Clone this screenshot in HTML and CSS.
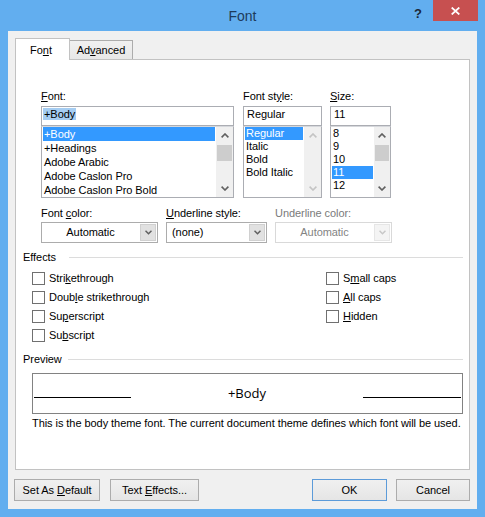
FILE: index.html
```html
<!DOCTYPE html>
<html>
<head>
<meta charset="utf-8">
<link rel="stylesheet" href="styles.css">
</head>
<body>
<div class="window">
  <div class="titlebar">
    <div class="title-balance"></div>
    <div class="title">Font</div>
    <div class="controls">
      <span class="help">?</span>
      <span class="close"><svg width="9" height="8" viewBox="0 0 9 8"><path d="M0.7 0.5L8.3 7.5M8.3 0.5L0.7 7.5" stroke="#fff" stroke-width="1.7" fill="none"/></svg></span>
    </div>
  </div>
  <div class="client">
    <div class="tabs">
      <div class="tab tab-active">Fo<u>n</u>t</div>
      <div class="tab tab-idle">Ad<u>v</u>anced</div>
    </div>
    <div class="panel">
      <div class="pickers">
        <div class="col col-font">
          <div class="label"><u>F</u>ont:</div>
          <div class="input"><span class="sel-text">+Body</span></div>
          <div class="list">
            <div class="items items-font">
              <div class="item selected">+Body</div>
              <div class="item">+Headings</div>
              <div class="item">Adobe Arabic</div>
              <div class="item">Adobe Caslon Pro</div>
              <div class="item">Adobe Caslon Pro Bold</div>
            </div>
            <div class="sbar">
              <div class="sarrow"><svg width="8" height="5" viewBox="0 0 8 5"><polyline points="0.6,4.4 4,1 7.4,4.4" fill="none" stroke="#606060" stroke-width="1.6"/></svg></div>
              <div class="thumb"></div>
              <div class="strack"></div>
              <div class="sarrow"><svg width="8" height="5" viewBox="0 0 8 5"><polyline points="0.6,0.6 4,4 7.4,0.6" fill="none" stroke="#606060" stroke-width="1.6"/></svg></div>
            </div>
          </div>
        </div>
        <div class="col col-style">
          <div class="label">Font st<u>y</u>le:</div>
          <div class="input">Regular</div>
          <div class="list">
            <div class="items items-small">
              <div class="item selected">Regular</div>
              <div class="item">Italic</div>
              <div class="item">Bold</div>
              <div class="item">Bold Italic</div>
            </div>
            <div class="sbar">
              <div class="sarrow"><svg width="8" height="5" viewBox="0 0 8 5"><polyline points="0.6,4.4 4,1 7.4,4.4" fill="none" stroke="#c4c4c4" stroke-width="1.6"/></svg></div>
              <div class="strack"></div>
              <div class="sarrow"><svg width="8" height="5" viewBox="0 0 8 5"><polyline points="0.6,0.6 4,4 7.4,0.6" fill="none" stroke="#c4c4c4" stroke-width="1.6"/></svg></div>
            </div>
          </div>
        </div>
        <div class="col col-size">
          <div class="label"><u>S</u>ize:</div>
          <div class="input">11</div>
          <div class="list">
            <div class="items items-small">
              <div class="item">8</div>
              <div class="item">9</div>
              <div class="item">10</div>
              <div class="item selected">11</div>
              <div class="item">12</div>
            </div>
            <div class="sbar sbar-narrow">
              <div class="sarrow"><svg width="8" height="5" viewBox="0 0 8 5"><polyline points="0.6,4.4 4,1 7.4,4.4" fill="none" stroke="#606060" stroke-width="1.6"/></svg></div>
              <div class="thumb"></div>
              <div class="strack"></div>
              <div class="sarrow"><svg width="8" height="5" viewBox="0 0 8 5"><polyline points="0.6,0.6 4,4 7.4,0.6" fill="none" stroke="#606060" stroke-width="1.6"/></svg></div>
            </div>
          </div>
        </div>
      </div>

      <div class="combos">
        <div class="ccol ccol-color">
          <div class="label">Font <u>c</u>olor:</div>
          <div class="combo">
            <div class="combo-text centered">Automatic</div>
            <div class="combo-btn"><svg width="7" height="5" viewBox="0 0 7 5"><polyline points="0.5,0.7 3.5,3.7 6.5,0.7" fill="none" stroke="#606060" stroke-width="1.5"/></svg></div>
          </div>
        </div>
        <div class="ccol ccol-ustyle">
          <div class="label"><u>U</u>nderline style:</div>
          <div class="combo">
            <div class="combo-text">(none)</div>
            <div class="combo-btn"><svg width="7" height="5" viewBox="0 0 7 5"><polyline points="0.5,0.7 3.5,3.7 6.5,0.7" fill="none" stroke="#606060" stroke-width="1.5"/></svg></div>
          </div>
        </div>
        <div class="ccol ccol-ucolor">
          <div class="label disabled">Underline color:</div>
          <div class="combo combo-disabled">
            <div class="combo-text centered">Automatic</div>
            <div class="combo-btn"><svg width="7" height="5" viewBox="0 0 7 5"><polyline points="0.5,0.7 3.5,3.7 6.5,0.7" fill="none" stroke="#c8c8c8" stroke-width="1.5"/></svg></div>
          </div>
        </div>
      </div>

      <div class="section-head section-effects">
        <span>Effects</span><span class="rule rule-effects"></span>
      </div>
      <div class="effects">
        <div class="ecol ecol-left">
          <div class="check"><span class="box"></span><span>Stri<u>k</u>ethrough</span></div>
          <div class="check"><span class="box"></span><span>Doub<u>l</u>e strikethrough</span></div>
          <div class="check"><span class="box"></span><span>Su<u>p</u>erscript</span></div>
          <div class="check"><span class="box"></span><span>Su<u>b</u>script</span></div>
        </div>
        <div class="ecol">
          <div class="check"><span class="box"></span><span>S<u>m</u>all caps</span></div>
          <div class="check"><span class="box"></span><span><u>A</u>ll caps</span></div>
          <div class="check"><span class="box"></span><span><u>H</u>idden</span></div>
        </div>
      </div>

      <div class="section-head section-preview">
        <span>Preview</span><span class="rule rule-preview"></span>
      </div>
      <div class="preview">
        <span class="pline"></span>
        <span class="ptext">+Body</span>
        <span class="pline pline-right"></span>
      </div>
      <div class="desc">This is the body theme font. The current document theme defines which font will be used.</div>
    </div>

    <div class="buttons">
      <div class="btn btn-default-set">Set As <u>D</u>efault</div>
      <div class="btn btn-effects">Text <u>E</u>ffects...</div>
      <div class="spacer"></div>
      <div class="btn btn-ok">OK</div>
      <div class="btn btn-cancel">Cancel</div>
    </div>
  </div>
</div>
</body>
</html>
```

FILE: styles.css
```css
* { box-sizing: border-box; margin: 0; padding: 0; }
html, body { margin: 0; background: #62aeef; }
body {
  font-family: "Liberation Sans", Arial, sans-serif;
  font-size: 11px;
  line-height: 13px;
  letter-spacing: -0.06px;
  color: #000;
}
u { text-decoration: underline; text-underline-offset: 1px; }

.window {
  width: 485px;
  height: 517px;
  background: #62aeef;
  display: flex;
  flex-direction: column;
}

/* title bar */
.titlebar {
  height: 31px;
  flex: none;
  display: flex;
  align-items: flex-start;
}
.title-balance { width: 72px; flex: none; }
.title {
  flex: 1;
  text-align: center;
  font-size: 14px;
  line-height: 20px;
  padding-top: 6px;
  color: #1e3b5a;
  letter-spacing: 0;
}
.controls {
  width: 72px;
  flex: none;
  display: flex;
  justify-content: flex-end;
  align-items: flex-start;
}
.help {
  flex: none;
  font-weight: bold;
  font-size: 13px;
  line-height: 13px;
  padding-top: 7px;
  margin-right: 11px;
  color: #1b2838;
}
.close {
  flex: none;
  width: 45px;
  height: 21px;
  margin-right: 7px;
  background: #c75050;
  display: flex;
  align-items: center;
  justify-content: center;
  padding-top: 1px;
}

/* client */
.client {
  flex: none;
  margin: 0 8px;
  height: 478px;
  background: #f0f0f0;
  padding: 7px 7px 0 7px;
}
.tabs {
  display: flex;
  height: 21px;
  align-items: flex-start;
}
.tab {
  border: 1px solid #c2c2c2;
  border-bottom: none;
  text-align: center;
}
.tab-active {
  position: relative;
  z-index: 1;
  width: 55px;
  height: 22px;
  background: #fff;
  padding: 5px 3px 0 0;
}
.tab-idle {
  width: 64px;
  height: 19px;
  margin-top: 2px;
  margin-left: -1px;
  background: linear-gradient(#f0f0f0, #e7e7e7);
  border-color: #acacac;
  padding-top: 3px;
}

.panel {
  height: 411px;
  border: 1px solid #c2c2c2;
  background: #fff;
}

/* pickers */
.pickers {
  display: flex;
  margin: 30px 0 0 25px;
}
.col-font { width: 193px; margin-right: 9px; }
.col-style { width: 79px; margin-right: 8px; }
.col-size { width: 61px; }
.label { height: 13px; margin-bottom: 3px; white-space: nowrap; }
.label.disabled { color: #7a7a7a; }
.input {
  height: 20px;
  border: 1px solid #abadb3;
  padding: 1px 2px 0 3px;
  white-space: nowrap;
}
.col-font .input { padding-left: 1px; }
.sel-text { background: #a5cdf2; padding: 0 1px; }
.list {
  height: 72px;
  border: 1px solid #abadb3;
  border-top-color: #d6d8dc;
  display: flex;
  overflow: hidden;
}
.items {
  flex: 1;
  padding: 0 1px;
  overflow: hidden;
}
.item { padding-left: 1px; white-space: nowrap; }
.items-font .item { height: 14px; line-height: 14px; }
.items-small .item { height: 13px; line-height: 13px; }
.item.selected { background: #3399ff; color: #fff; }
.sbar {
  width: 17px;
  background: #f0f0f0;
  display: flex;
  flex-direction: column;
}
.sbar-narrow { width: 16px; }
.sarrow {
  height: 17px;
  display: flex;
  align-items: center;
  justify-content: center;
}
.thumb {
  height: 16px;
  margin: 1px 1px 0 1px;
  background: #cdcdcd;
}
.strack { flex: 1; }

/* combos */
.combos {
  display: flex;
  margin: 9px 0 0 25px;
}
.label + .combo { margin-top: -1px; }
.ccol-color { width: 117px; margin-right: 8px; }
.ccol-ustyle { width: 101px; margin-right: 8px; }
.ccol-ucolor { width: 117px; }
.combo {
  height: 21px;
  border: 1px solid #acacac;
  background: #fff;
  display: flex;
}
.combo-text {
  flex: 1;
  line-height: 19px;
  padding-left: 5px;
  white-space: nowrap;
}
.combo-text.centered { text-align: center; padding-left: 0; }
.combo-btn {
  width: 16px;
  height: 17px;
  margin: 1px;
  background: #e1e1e1;
  border: 1px solid #d0d0d0;
  display: flex;
  align-items: center;
  justify-content: center;
}
.combo-disabled { border-color: #d9d9d9; }
.combo-disabled .combo-text { color: #838383; }
.combo-disabled .combo-btn { background: #f4f4f4; border-color: #e6e6e6; }

/* section headers */
.section-head {
  display: flex;
  align-items: flex-start;
  margin: 7px 6px 0 7px;
  height: 13px;
}
.section-effects { margin-top: 8px; }
.rule {
  flex: 1;
  height: 1px;
  margin-top: 6px;
  background: #dcdcdc;
}
.rule-effects { margin-left: 13px; }
.rule-preview { margin-left: 6px; }

/* effects */
.effects {
  display: flex;
  margin: 5px 0 0 16px;
}
.ecol-left { width: 294px; }
.check {
  height: 19px;
  display: flex;
  align-items: center;
  white-space: nowrap;
}
.box {
  flex: none;
  width: 13px;
  height: 13px;
  border: 1px solid #707070;
  background: #fff;
  margin-right: 4px;
}

/* preview */
.preview {
  margin: 7px 0 0 16px;
  width: 431px;
  height: 41px;
  border: 1px solid #828282;
  display: flex;
  align-items: baseline;
  justify-content: space-between;
  padding: 12px 1px 0 1px;
}
.section-preview { margin-top: 8px; }
.section-preview + .preview { margin-top: 7px; }
.pline {
  display: inline-block;
  width: 97px;
  height: 0;
  border-bottom: 1px solid #000;
}
.pline-right { width: 98px; }
.ptext {
  font-family: "Open Sans", "Liberation Sans", sans-serif;
  font-size: 13px;
  line-height: 15px;
  letter-spacing: 0;
}
.desc {
  margin: 3px 0 0 16px;
  white-space: nowrap;
}

/* buttons */
.buttons {
  display: flex;
  margin-top: 9px;
}
.spacer { flex: 1; }
.btn {
  height: 22px;
  border: 1px solid #acacac;
  background: linear-gradient(#f0f0f0, #e5e5e5);
  text-align: center;
  line-height: 20px;
  white-space: nowrap;
}
.btn-default-set { width: 86px; margin-left: -1px; }
.btn-effects { width: 89px; margin-left: 10px; }
.btn-ok { width: 75px; border-color: #5c9bd9; }
.btn-cancel { width: 74px; margin-left: 9px; }
```
